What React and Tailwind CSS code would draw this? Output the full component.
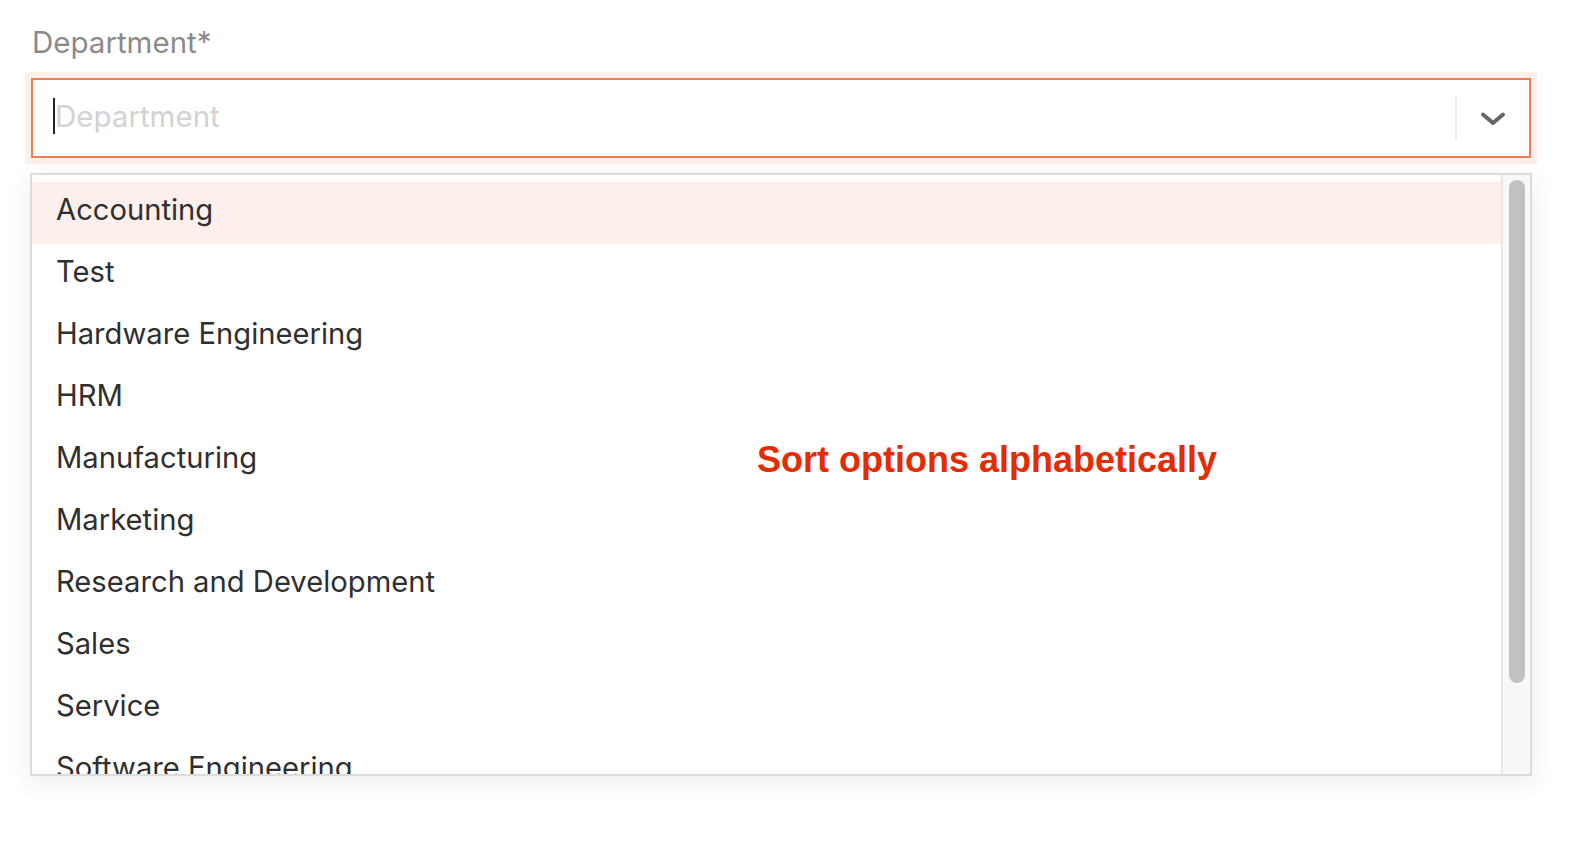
import React from "react";

const items = [
  "Accounting",
  "Test",
  "Hardware Engineering",
  "HRM",
  "Manufacturing",
  "Marketing",
  "Research and Development",
  "Sales",
  "Service",
  "Software Engineering",
];

export default function App() {
  return (
    <div className="relative w-[1572px] h-[850px] bg-white font-['Inter',sans-serif]">
      <div className="pl-[32px] pt-[25px] text-[29.5px] leading-[34px] text-[#8a8a8a]">
        Department*
      </div>
      <div className="ml-[31px] mt-[19px] w-[1500px] h-[80px] border-2 border-[#f27a55] ring-[6px] ring-[#fdf0eb] flex items-center">
        <div className="flex-1 flex items-center pl-[20px] pb-[5px]">
          <div className="w-[2px] h-[36px] bg-[#222]" />
          <span className="text-[29.5px] text-[#d2d2d2] leading-[36px]">Department</span>
        </div>
        <div className="w-[2px] h-[44px] bg-[#ececec]" />
        <div className="w-[72px] flex items-center justify-center pt-[2px]">
          <svg width="26" height="16" viewBox="0 0 26 16" fill="none">
            <path d="M3 3.5 L13 12 L23 3.5" stroke="#666" strokeWidth="4" strokeLinecap="round" strokeLinejoin="round" />
          </svg>
        </div>
      </div>
      <div className="ml-[30px] mt-[15px] w-[1502px] h-[603px] border-2 border-[#dcdcdc] flex shadow-[0_6px_24px_rgba(0,0,0,0.08)] bg-white">
        <div className="flex-1 overflow-hidden pt-[7px]">
          {items.map((it, i) => (
            <div
              key={it}
              className={`h-[62px] flex items-center pl-[24px] pb-[6px] text-[29.2px] text-[#2f2f2f] ${i === 0 ? "bg-[#fdf0ec]" : ""}`}
            >
              {it}
            </div>
          ))}
        </div>
        <div className="w-[29px] bg-[#f8f8f8] border-l-2 border-[#e8e8e8] pt-[5px] flex justify-center">
          <div className="w-[16px] h-[503px] rounded-full bg-[#c1c1c1]" />
        </div>
      </div>
      <div className="absolute left-[757px] top-[433px] font-['Liberation_Sans',Arial,sans-serif] font-bold text-[36px] text-[#e52b00]">
        Sort options alphabetically
      </div>
    </div>
  );
}
